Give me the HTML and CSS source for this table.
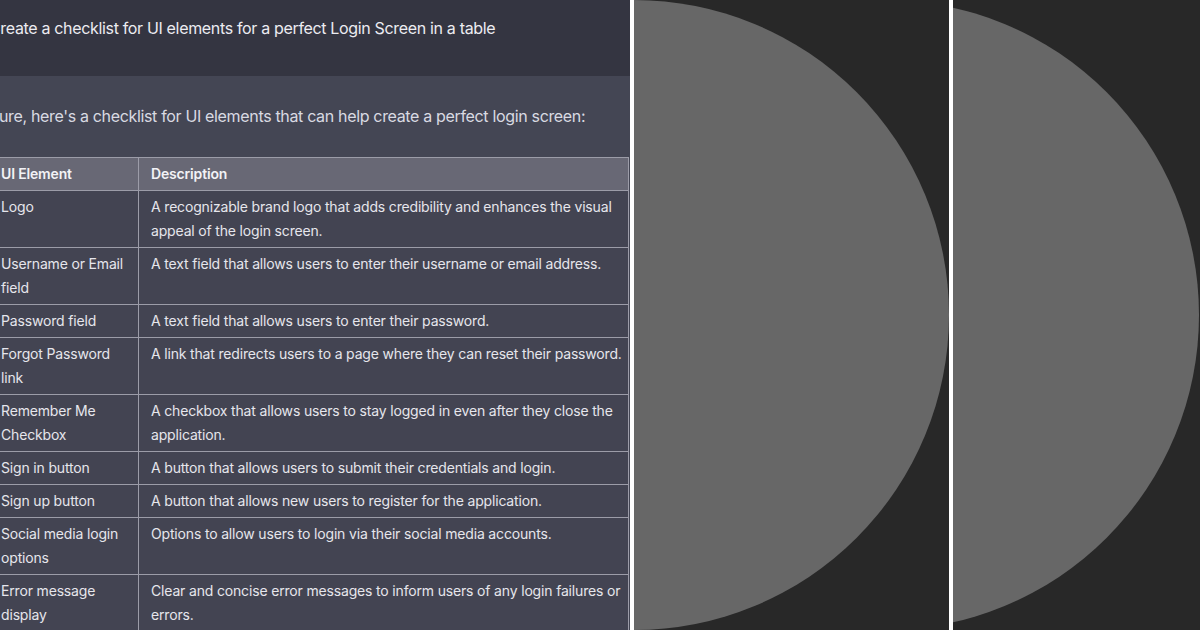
FILE: index.html
```html
<!DOCTYPE html>
<html>
<head>
<meta charset="utf-8">
<link rel="stylesheet" href="styles.css">
</head>
<body>
<div class="stage">
  <section class="chat">
    <div class="msg msg-user">
      <p class="msg-text">Create a checklist for UI elements for a perfect Login Screen in a table</p>
    </div>
    <div class="msg msg-bot">
      <p class="msg-text intro">Sure, here's a checklist for UI elements that can help create a perfect login screen:</p>
      <table class="checklist">
        <thead>
          <tr><th class="col-el">UI Element</th><th class="col-desc">Description</th></tr>
        </thead>
        <tbody>
          <tr><td>Logo</td><td class="col-desc">A recognizable brand logo that adds credibility and enhances the visual appeal of the login screen.</td></tr>
          <tr><td>Username or Email field</td><td class="col-desc">A text field that allows users to enter their username or email address.</td></tr>
          <tr><td>Password field</td><td class="col-desc">A text field that allows users to enter their password.</td></tr>
          <tr><td>Forgot Password link</td><td class="col-desc">A link that redirects users to a page where they can reset their password.</td></tr>
          <tr><td>Remember Me Checkbox</td><td class="col-desc">A checkbox that allows users to stay logged in even after they close the application.</td></tr>
          <tr><td>Sign in button</td><td class="col-desc">A button that allows users to submit their credentials and login.</td></tr>
          <tr><td>Sign up button</td><td class="col-desc">A button that allows new users to register for the application.</td></tr>
          <tr><td>Social media login options</td><td class="col-desc">Options to allow users to login via their social media accounts.</td></tr>
          <tr><td>Error message display</td><td class="col-desc">Clear and concise error messages to inform users of any login failures or errors.</td></tr>
          <tr><td>Loading indicator</td><td class="col-desc">A visual cue that shows the login is in progress.</td></tr>
        </tbody>
      </table>
    </div>
  </section>
  <section class="panel panel-mid">
    <div class="disc disc-mid"></div>
  </section>
  <section class="panel panel-right">
    <div class="disc disc-right"></div>
  </section>
</div>
</body>
</html>
```

FILE: styles.css
```css
* { box-sizing: border-box; }
html, body { margin: 0; padding: 0; }
body {
  width: 1200px;
  height: 630px;
  overflow: hidden;
  background: #ffffff;
  font-family: Inter, "Noto Sans", sans-serif;
  letter-spacing: -0.021em;
}
.stage {
  display: flex;
  gap: 4px;
  width: 1200px;
  height: 630px;
}
.chat {
  width: 630px;
  flex: none;
  height: 630px;
  overflow: hidden;
  background: #444654;
}
.msg-user {
  background: #343541;
  height: 76px;
  padding: 14px 0 0 0;
}
.msg-text {
  margin: 0 0 0 -11px;
  font-size: 16px;
  line-height: 28px;
  white-space: nowrap;
}
.msg-user .msg-text { color: #ececf1; }
.msg-bot {
  padding-top: 26px;
}
.msg-bot .intro {
  color: #d9dae2;
  margin-bottom: 27px;
}
.checklist {
  margin-left: -12px;
  width: 641px;
  border-collapse: collapse;
  font-size: 14px;
  line-height: 24px;
  letter-spacing: -0.012em;
  color: #e6e6ec;
}
.checklist th,
.checklist td {
  border: 1px solid #9c9ca8;
  padding: 4px 12px;
  text-align: left;
  vertical-align: top;
}
.checklist .col-desc { padding-right: 4px; }
.checklist th {
  background: #686875;
  font-weight: 600;
  color: #f2f2f6;
}
.checklist td { background: #434452; }
.col-el { width: 150px; }
.panel {
  flex: none;
  height: 630px;
  overflow: hidden;
  background: #282828;
}
.panel-mid { width: 315px; }
.panel-right { width: 247px; }
.disc {
  width: 630px;
  height: 630px;
  border-radius: 50%;
  background: #676767;
}
.disc-mid { margin-left: -315px; }
.disc-right { margin-left: -384px; }
```
